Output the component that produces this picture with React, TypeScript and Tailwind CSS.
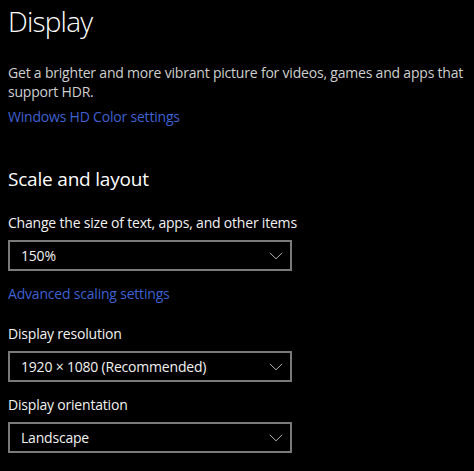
function Chevron() {
  return (
    <svg width="14" height="8" viewBox="0 0 14 8" fill="none" className="shrink-0">
      <path d="M0.8 0.8 L7 6.8 L13.2 0.8" stroke="#b0b0b0" strokeWidth="1" />
    </svg>
  );
}

function Select({ value }: { value: string }) {
  return (
    <div className="flex h-[31px] w-[284px] items-center justify-between border-2 border-[#7a7a7a] pl-[11px] pr-[7px] text-[14px] leading-[27px] tracking-[-0.2px] text-[#f2f2f2]">
      <span>{value}</span>
      <Chevron />
    </div>
  );
}

export default function App() {
  return (
    <div
      className="h-[471px] w-[474px] overflow-hidden bg-black px-2 text-white"
      style={{ fontFamily: '"Open Sans", "Noto Sans", sans-serif' }}
    >
      <h1 className="text-[28px] font-light leading-[42px] tracking-[-0.8px] text-white">Display</h1>

      <p className="mt-[21px] w-[462px] text-[14px] leading-[19px] tracking-[-0.2px] text-[#cfcfcf]">
        Get a brighter and more vibrant picture for videos, games and apps that support HDR.
      </p>
      <a className="mt-[6px] block text-[14px] leading-[19px] tracking-[-0.2px] text-[#3f60d2]">
        Windows HD Color settings
      </a>

      <h2 className="mt-[39px] text-[19px] leading-[28px] tracking-[-0.2px] text-white">Scale and layout</h2>

      <p className="mt-[20px] text-[14px] leading-[19px] tracking-[-0.2px] text-[#f2f2f2]">
        Change the size of text, apps, and other items
      </p>
      <div className="mt-[8px]">
        <Select value="150%" />
      </div>

      <a className="mt-[13px] block text-[14px] leading-[19px] tracking-[-0.2px] text-[#3f60d2]">
        Advanced scaling settings
      </a>

      <p className="mt-[21px] text-[14px] leading-[19px] tracking-[-0.2px] text-[#f2f2f2]">Display resolution</p>
      <div className="mt-[8px]">
        <Select value="1920 × 1080 (Recommended)" />
      </div>

      <p className="mt-[13px] text-[14px] leading-[19px] tracking-[-0.2px] text-[#f2f2f2]">Display orientation</p>
      <div className="mt-[8px]">
        <Select value="Landscape" />
      </div>
    </div>
  );
}
